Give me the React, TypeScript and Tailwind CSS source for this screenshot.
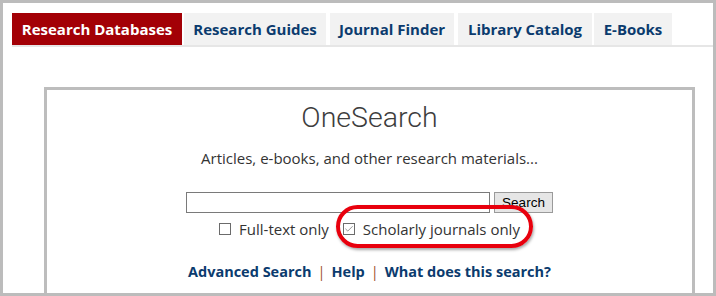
import { Check } from 'lucide-react';

const tabs = [
  { label: 'Research Databases', cls: 'w-[170px]' },
  { label: 'Research Guides', cls: 'w-[142px] ml-[2px]' },
  { label: 'Journal Finder', cls: 'w-[124px] ml-[4px]' },
  { label: 'Library Catalog', cls: 'w-[134px] ml-[4px]' },
  { label: 'E-Books', cls: 'w-[78px] ml-[2px]' },
];

function Box({ checked }: { checked?: boolean }) {
  return (
    <span className="w-[12px] h-[12px] border border-[#6b6b6b] bg-white flex items-center justify-center shrink-0">
      {checked && <Check className="w-[10px] h-[10px] text-[#555]" strokeWidth={1.5} />}
    </span>
  );
}

export default function App() {
  return (
    <div className="w-[716px] h-[296px] border-[3px] border-[#bcbcbc] bg-white overflow-hidden font-['Open_Sans',sans-serif]">
      {/* Tabs */}
      <div className="pl-[9px] pt-[10px]">
        <div className="flex border-b-2 border-[#e6e6e6]">
          {tabs.map((t, i) => (
            <div
              key={t.label}
              className={`${t.cls} h-[32px] flex items-center justify-center whitespace-nowrap text-[15px] font-bold ${
                i === 0 ? 'bg-[#a30006] text-white' : 'bg-[#f2f2f2] text-[#0b3b6e]'
              }`}
            >
              {t.label}
            </div>
          ))}
        </div>
      </div>

      {/* OneSearch box */}
      <div className="ml-[41px] mt-[40px] w-[651px] h-[260px] border-[3px] border-[#bdbdbd] relative">
        <h1 className="text-center font-['Roboto',sans-serif] font-light text-[28.5px] leading-[36px] text-[#3d3d3d] mt-[10px]">
          OneSearch
        </h1>
        <p className="text-center text-[15px] leading-[20px] text-[#333] mt-[12px]">
          Articles, e-books, and other research materials...
        </p>
        <div className="flex justify-center items-center gap-[4px] mt-[24px]">
          <input type="text" className="w-[304px] h-[21px] border border-[#7a7a7a] bg-white" />
          <button className="w-[59px] h-[21px] border border-[#9a9a9a] bg-[#e6e6e6] text-[13.5px] text-black font-['Liberation_Sans',sans-serif] leading-none">
            Search
          </button>
        </div>
        <div className="flex justify-center items-center mt-[5px] text-[15px] text-[#333] h-[22px]">
          <Box />
          <span className="ml-[8px]">Full-text only</span>
          <span className="ml-[14px]"><Box checked /></span>
          <span className="ml-[8px]">Scholarly journals only</span>
        </div>
        <div className="flex justify-center items-center mt-[21px] text-[14.5px] font-bold text-[#0b3b6e]">
          <span>Advanced Search</span>
          <span className="mx-[6px] font-normal text-[#a0522d]">|</span>
          <span>Help</span>
          <span className="mx-[6px] font-normal text-[#a0522d]">|</span>
          <span>What does this search?</span>
        </div>

        {/* red highlight */}
        <div className="absolute left-[289px] top-[115px] w-[197px] h-[43px] rounded-full border-[4px] border-[#e8000d] shadow-[1px_2px_3px_rgba(0,0,0,0.35)]" />
      </div>
    </div>
  );
}
